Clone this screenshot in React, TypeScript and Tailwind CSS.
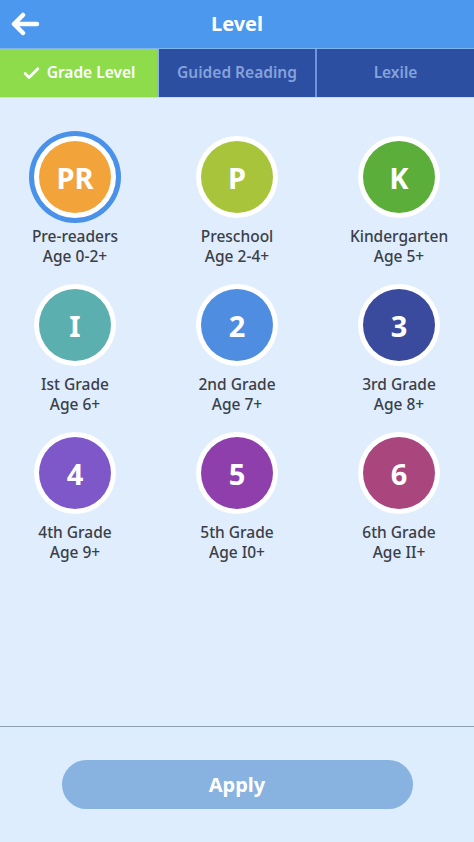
import { Check } from 'lucide-react';

interface Level {
  key: string;
  badge: string;
  name: string;
  age: string;
  color: string;
}

const LEVELS: Level[] = [
  { key: 'pr', badge: 'PR', name: 'Pre-readers', age: 'Age 0-2+', color: 'bg-[#f2a43a]' },
  { key: 'p', badge: 'P', name: 'Preschool', age: 'Age 2-4+', color: 'bg-[#a7c43b]' },
  { key: 'k', badge: 'K', name: 'Kindergarten', age: 'Age 5+', color: 'bg-[#5bae3a]' },
  { key: '1', badge: 'I', name: 'Ist Grade', age: 'Age 6+', color: 'bg-[#5bafae]' },
  { key: '2', badge: '2', name: '2nd Grade', age: 'Age 7+', color: 'bg-[#4e8ddf]' },
  { key: '3', badge: '3', name: '3rd Grade', age: 'Age 8+', color: 'bg-[#3a4a9d]' },
  { key: '4', badge: '4', name: '4th Grade', age: 'Age 9+', color: 'bg-[#7e58c9]' },
  { key: '5', badge: '5', name: '5th Grade', age: 'Age I0+', color: 'bg-[#8e3fab]' },
  { key: '6', badge: '6', name: '6th Grade', age: 'Age II+', color: 'bg-[#a8467d]' },
];

const FONT = { fontFamily: '"Noto Sans", "Open Sans", sans-serif' };

function LevelItem({ level, selected }: { level: Level; selected: boolean }) {
  return (
    <div className="flex w-[92px] flex-col items-center">
      {/* Badge */}
      <div
        className={`flex h-[92px] w-[92px] items-center justify-center rounded-full ${
          selected ? 'bg-[#4a91ea]' : ''
        }`}
      >
        <div className="flex h-[82px] w-[82px] items-center justify-center rounded-full bg-white">
          <div
            className={`flex h-[72px] w-[72px] items-center justify-center rounded-full ${level.color}`}
          >
            <span className="text-[29px] font-bold leading-none text-white">{level.badge}</span>
          </div>
        </div>
      </div>

      {/* Label */}
      <div className="mt-[3px] whitespace-nowrap text-center text-[15.5px] font-medium leading-[20px] text-[#3b3e48]">
        <p>{level.name}</p>
        <p>{level.age}</p>
      </div>
    </div>
  );
}

export default function App() {
  const rows = [LEVELS.slice(0, 3), LEVELS.slice(3, 6), LEVELS.slice(6, 9)];

  return (
    <div className="flex h-[842px] w-[474px] flex-col bg-[#dfedfc]" style={FONT}>
      {/* Header */}
      <div className="relative flex h-[48px] items-center justify-center bg-[#4b98ee]">
        <button className="absolute left-[10px] top-[12px] text-white">
          <svg width="30" height="24" viewBox="0 0 30 24" fill="none">
            <path
              d="M27 12H4M13 3L4 12L13 21"
              stroke="currentColor"
              strokeWidth="4.5"
              strokeLinecap="round"
              strokeLinejoin="round"
            />
          </svg>
        </button>
        <h1 className="text-[20px] font-bold text-white">Level</h1>
      </div>

      {/* Tabs */}
      <div className="flex h-[50px] border-t border-[#7fb6ee] border-b border-b-[#c9dcf2]">
        <div className="flex w-[157px] items-center justify-center gap-[6px] bg-[#8edc4b] text-[15.5px] font-semibold text-white">
          <Check size={19} strokeWidth={3.5} />
          Grade Level
        </div>
        <div className="w-[2px] bg-[#8fb3e8]" />
        <div className="flex w-[156px] items-center justify-center bg-[#2c4fa2] text-[15.5px] font-semibold text-[#86a2da]">
          Guided Reading
        </div>
        <div className="w-[2px] bg-[#6f95de]" />
        <div className="flex flex-1 items-center justify-center bg-[#2c4fa2] text-[15.5px] font-semibold text-[#86a2da]">
          Lexile
        </div>
      </div>

      {/* Levels */}
      <div className="flex flex-col gap-[13px] pt-[33px]">
        {rows.map((row, r) => (
          <div key={r} className="flex justify-center gap-[70px]">
            {row.map((level) => (
              <LevelItem key={level.key} level={level} selected={level.key === 'pr'} />
            ))}
          </div>
        ))}
      </div>

      <div className="flex-1" />

      {/* Footer */}
      <div className="flex h-[116px] flex-col border-t border-[#8c9fb2] bg-[#deedfd]">
        <div className="flex justify-center pt-[33px]">
          <button className="h-[49px] w-[351px] rounded-full bg-[#88b2df] text-[20px] font-bold text-white">
            Apply
          </button>
        </div>
      </div>
    </div>
  );
}
